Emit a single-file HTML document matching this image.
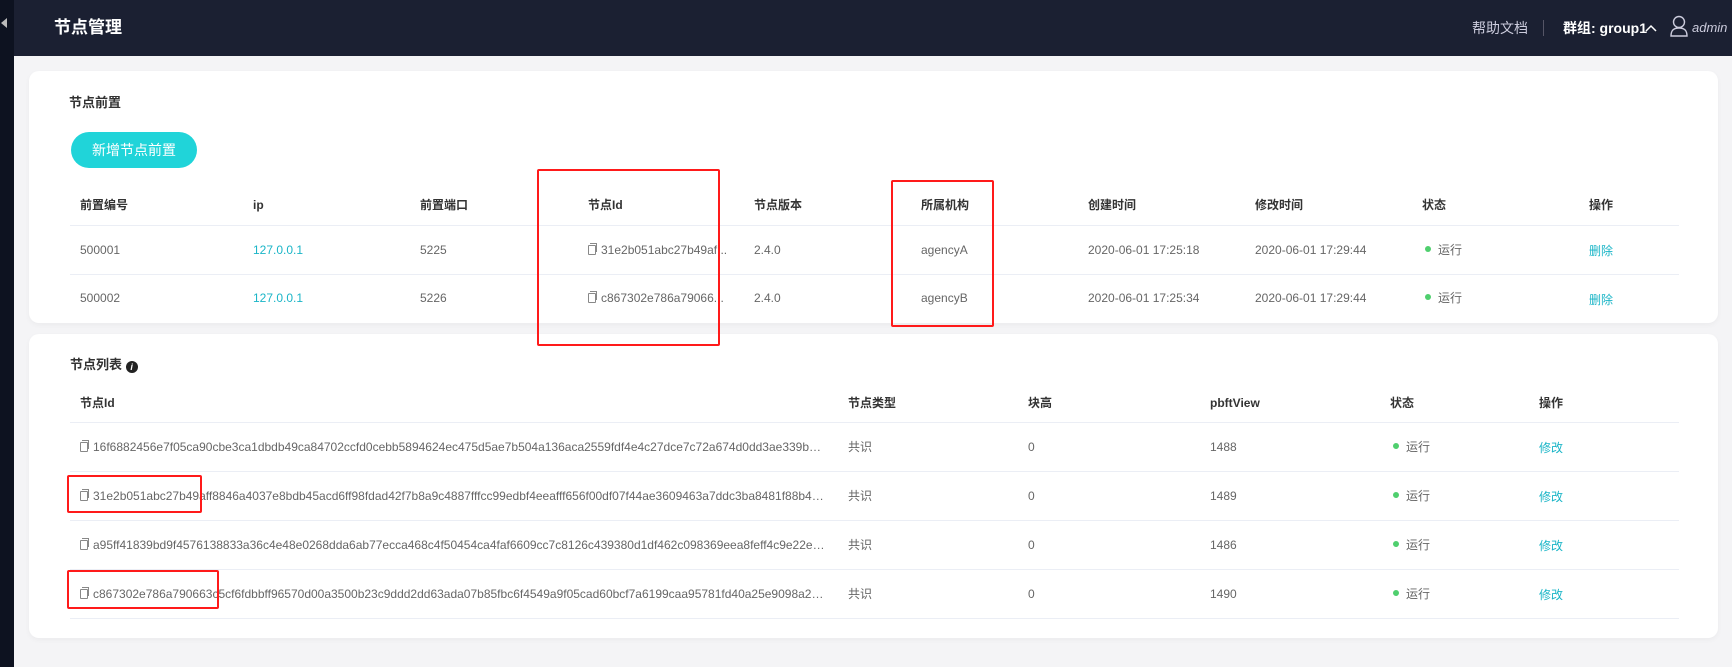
<!DOCTYPE html>
<html><head><meta charset="utf-8"><style>
*{margin:0;padding:0;box-sizing:border-box}
body{width:1732px;height:667px;background:#f4f4f6;position:relative;overflow:hidden;font-family:"Liberation Sans","Noto Sans CJK SC",sans-serif;color:#666;font-size:12px}
.a{position:absolute;white-space:nowrap;line-height:16px}
.side{left:0;top:0;width:14px;height:667px;background:#0d1220}
.hdr{left:14px;top:0;width:1718px;height:56px;background:#1b2032}
.card{background:#fff;border-radius:10px;box-shadow:0 2px 6px rgba(0,0,0,.04)}
.th{color:#333;font-weight:bold;font-size:12px}
.ln{height:1px;background:#ebeef5}
.teal{color:#1ab5c7}
.dot{display:inline-block;width:6px;height:6px;border-radius:3px;background:#4fcf6e;margin-right:7px;vertical-align:2px}
.red{border:2px solid #ff1a1a;border-radius:2px}
.cp{display:inline-block;width:8px;height:10px;border:1px solid #888;border-radius:1px;margin-right:5px;vertical-align:-1px;position:relative}
.cp:after{content:"";position:absolute;left:1px;top:-3px;width:6px;height:8px;border-top:1px solid #888;border-right:1px solid #888}
.hash{width:745px;overflow:hidden;text-overflow:ellipsis}
</style></head><body>
<div class="a side"></div>
<div class="a" style="left:1px;top:18px;width:0;height:0;border-top:5px solid transparent;border-bottom:5px solid transparent;border-right:6px solid #bbb"></div>
<div class="a hdr"></div>
<div class="a" style="left:54px;top:18px;color:#fff;font-size:17px;font-weight:bold;line-height:20px">节点管理</div>
<div class="a" style="left:1472px;top:20px;color:#ccd;font-size:14px">帮助文档</div>
<div class="a" style="left:1543px;top:20px;width:1px;height:16px;background:#556"></div>
<div class="a" style="left:1563px;top:20px;color:#fff;font-size:14px;font-weight:bold">群组: group1</div>
<svg class="a" style="left:1645px;top:23px" width="12" height="9"><path d="M1 8L6 3L11 8" stroke="#fff" stroke-width="1.5" fill="none"/></svg>
<svg class="a" style="left:1669px;top:15px" width="20" height="22"><circle cx="10" cy="7" r="5.5" stroke="#ccd" stroke-width="1.4" fill="none"/><path d="M2 21C2 15 5 13 10 13C15 13 18 15 18 21Z" stroke="#ccd" stroke-width="1.4" fill="none"/></svg>
<div class="a" style="left:1692px;top:20px;color:#ccd;font-size:13px;font-style:italic">admin</div>

<div class="a card" style="left:29px;top:71px;width:1689px;height:252px"></div>
<div class="a th" style="left:69px;top:95px;font-size:13px">节点前置</div>
<div class="a" style="left:71px;top:132px;width:126px;height:36px;border-radius:18px;background:#20d4d9;color:#fff;font-size:14px;text-align:center;line-height:36px">新增节点前置</div>
<div class="a th" style="left:80px;top:197px">前置编号</div>
<div class="a th" style="left:253px;top:197px">ip</div>
<div class="a th" style="left:420px;top:197px">前置端口</div>
<div class="a th" style="left:588px;top:197px">节点Id</div>
<div class="a th" style="left:754px;top:197px">节点版本</div>
<div class="a th" style="left:921px;top:197px">所属机构</div>
<div class="a th" style="left:1088px;top:197px">创建时间</div>
<div class="a th" style="left:1255px;top:197px">修改时间</div>
<div class="a th" style="left:1422px;top:197px">状态</div>
<div class="a th" style="left:1589px;top:197px">操作</div>
<div class="a ln" style="left:70px;top:225px;width:1609px"></div>
<div class="a ln" style="left:70px;top:274px;width:1609px"></div>
<div class="a" style="left:80px;top:242px">500001</div>
<div class="a teal" style="left:253px;top:242px">127.0.0.1</div>
<div class="a" style="left:420px;top:242px">5225</div>
<div class="a" style="left:588px;top:242px"><span class="cp"></span>31e2b051abc27b49af...</div>
<div class="a" style="left:754px;top:242px">2.4.0</div>
<div class="a" style="left:921px;top:242px">agencyA</div>
<div class="a" style="left:1088px;top:242px">2020-06-01 17:25:18</div>
<div class="a" style="left:1255px;top:242px">2020-06-01 17:29:44</div>
<div class="a" style="left:1425px;top:242px"><span class="dot"></span>运行</div>
<div class="a teal" style="left:1589px;top:243px">删除</div>
<div class="a" style="left:80px;top:290px">500002</div>
<div class="a teal" style="left:253px;top:290px">127.0.0.1</div>
<div class="a" style="left:420px;top:290px">5226</div>
<div class="a" style="left:588px;top:290px"><span class="cp"></span>c867302e786a79066...</div>
<div class="a" style="left:754px;top:290px">2.4.0</div>
<div class="a" style="left:921px;top:290px">agencyB</div>
<div class="a" style="left:1088px;top:290px">2020-06-01 17:25:34</div>
<div class="a" style="left:1255px;top:290px">2020-06-01 17:29:44</div>
<div class="a" style="left:1425px;top:290px"><span class="dot"></span>运行</div>
<div class="a teal" style="left:1589px;top:292px">删除</div>

<div class="a card" style="left:29px;top:334px;width:1689px;height:304px"></div>
<div class="a th" style="left:70px;top:357px;font-size:13px">节点列表 <span style="display:inline-block;width:12px;height:12px;border-radius:6px;background:#222;color:#fff;font-size:9px;text-align:center;line-height:12px;font-style:italic;vertical-align:-1px">i</span></div>
<div class="a th" style="left:80px;top:395px">节点Id</div>
<div class="a th" style="left:848px;top:395px">节点类型</div>
<div class="a th" style="left:1028px;top:395px">块高</div>
<div class="a th" style="left:1210px;top:395px">pbftView</div>
<div class="a th" style="left:1390px;top:395px">状态</div>
<div class="a th" style="left:1539px;top:395px">操作</div>
<div class="a ln" style="left:70px;top:422px;width:1609px"></div>
<div class="a ln" style="left:70px;top:471px;width:1609px"></div>
<div class="a ln" style="left:70px;top:520px;width:1609px"></div>
<div class="a ln" style="left:70px;top:569px;width:1609px"></div>
<div class="a ln" style="left:70px;top:618px;width:1609px"></div>

<div class="a hash" style="left:80px;top:439px"><span class="cp"></span>16f6882456e7f05ca90cbe3ca1dbdb49ca84702ccfd0cebb5894624ec475d5ae7b504a136aca2559fdf4e4c27dce7c72a674d0dd3ae339b2c1f3a5d7e</div>
<div class="a hash" style="left:80px;top:488px"><span class="cp"></span>31e2b051abc27b49aff8846a4037e8bdb45acd6ff98fdad42f7b8a9c4887fffcc99edbf4eeafff656f00df07f44ae3609463a7ddc3ba8481f88b4c2d1e5a7b</div>
<div class="a hash" style="left:80px;top:537px"><span class="cp"></span>a95ff41839bd9f4576138833a36c4e48e0268dda6ab77ecca468c4f50454ca4faf6609cc7c8126c439380d1df462c098369eea8feff4c9e22e4b1c3d5f7a</div>
<div class="a hash" style="left:80px;top:586px"><span class="cp"></span>c867302e786a790663c5cf6fdbbff96570d00a3500b23c9ddd2dd63ada07b85fbc6f4549a9f05cad60bcf7a6199caa95781fd40a25e9098a2e3f1b5c7d</div>
<div class="a" style="left:848px;top:439px">共识</div><div class="a" style="left:1028px;top:439px">0</div><div class="a" style="left:1210px;top:439px">1488</div><div class="a" style="left:1393px;top:439px"><span class="dot"></span>运行</div><div class="a teal" style="left:1539px;top:440px">修改</div>
<div class="a" style="left:848px;top:488px">共识</div><div class="a" style="left:1028px;top:488px">0</div><div class="a" style="left:1210px;top:488px">1489</div><div class="a" style="left:1393px;top:488px"><span class="dot"></span>运行</div><div class="a teal" style="left:1539px;top:489px">修改</div>
<div class="a" style="left:848px;top:537px">共识</div><div class="a" style="left:1028px;top:537px">0</div><div class="a" style="left:1210px;top:537px">1486</div><div class="a" style="left:1393px;top:537px"><span class="dot"></span>运行</div><div class="a teal" style="left:1539px;top:538px">修改</div>
<div class="a" style="left:848px;top:586px">共识</div><div class="a" style="left:1028px;top:586px">0</div><div class="a" style="left:1210px;top:586px">1490</div><div class="a" style="left:1393px;top:586px"><span class="dot"></span>运行</div><div class="a teal" style="left:1539px;top:587px">修改</div>

<div class="a red" style="left:537px;top:169px;width:183px;height:177px"></div>
<div class="a red" style="left:891px;top:180px;width:103px;height:147px"></div>
<div class="a red" style="left:67px;top:475px;width:135px;height:38px"></div>
<div class="a red" style="left:67px;top:570px;width:152px;height:39px"></div>
</body></html>
